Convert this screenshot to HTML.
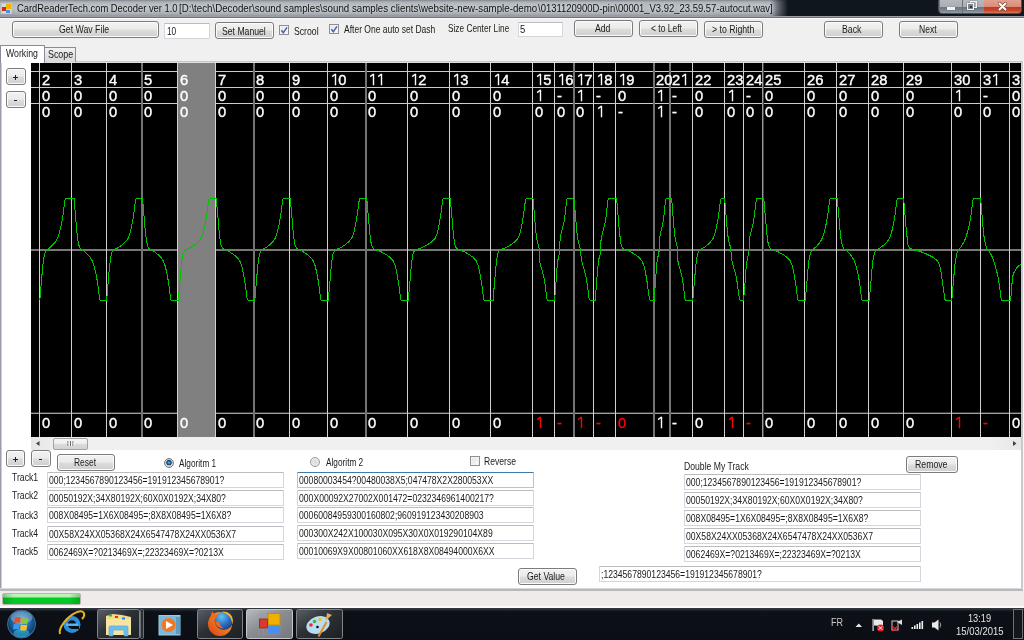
<!DOCTYPE html><html><head><meta charset="utf-8"><style>
*{margin:0;padding:0;box-sizing:border-box}
html,body{width:1024px;height:640px;overflow:hidden;background:#f0f0f0;font-family:"Liberation Sans",sans-serif;position:relative}
.a{position:absolute}
.t{position:absolute;white-space:pre;transform-origin:0 0}
.btn{position:absolute;border:1px solid #7c7c7c;border-radius:3px;background:linear-gradient(#f2f2f2 0%,#ebebeb 48%,#dddddd 52%,#cfcfcf 100%);box-shadow:inset 0 0 0 1px #fbfbfb}
.tb{position:absolute;background:#fff;border:1px solid #d3d6dc;border-top-color:#b9bcc1;border-radius:1px}
.cb{position:absolute;border:1px solid #8e8f8f;background:linear-gradient(135deg,#e3e3e3,#fbfbfb);box-shadow:inset 0 0 0 1px #f4f4f4}
</style></head><body>
<div class="a" style="left:0;top:0;width:1024px;height:16px;background:#10161e;overflow:hidden">
<div class="a" style="left:0;top:0;width:800px;height:16px;background:linear-gradient(#7a8086 0,#9ca2a8 1px,#b0b6bc 3px,#b8bec4 8px,#b0b6bc 11px,#a2a8ae 14px,#92989e 16px);-webkit-mask-image:linear-gradient(90deg,#000 0,#000 770px,rgba(0,0,0,0.5) 778px,transparent 788px)"></div>
</div>
<div class="a" style="left:0;top:16px;width:1024px;height:1px;background:#9a9ea4"></div>
<div class="a" style="left:0;top:17px;width:1024px;height:1px;background:#6e7176"></div>
<div class="a" style="left:0;top:18px;width:1024px;height:1px;background:#fbfbfb"></div>
<div class="a" style="left:1px;top:3px;width:11px;height:11px;background:#d8dadc;border:1px solid #c8c8c8"></div>
<div class="a" style="left:6px;top:4px;width:5px;height:5px;background:#f0b400"></div>
<div class="a" style="left:2px;top:7px;width:4px;height:4px;background:#d02a20"></div>
<div class="a" style="left:6px;top:10px;width:4px;height:3px;background:#4a8ef0"></div>
<div class="t" style="left:16.53px;top:4.00px;font-size:10.43px;line-height:10.43px;transform:scaleX(0.9000);color:#101010;text-shadow:0 0 4px rgba(225,230,236,0.9),0 0 8px rgba(225,230,236,0.6)">CardReaderTech.com Decoder ver 1.0</div>
<div class="t" style="left:179.42px;top:4.00px;font-size:10.43px;line-height:10.43px;transform:scaleX(0.9327);color:#101010;text-shadow:0 0 4px rgba(225,230,236,0.9),0 0 8px rgba(225,230,236,0.6)">[D:\tech\Decoder\sound samples\sound samples clients\website-new-sample-demo</div>
<div class="t" style="left:537.80px;top:4.00px;font-size:10.43px;line-height:10.43px;transform:scaleX(0.9089);color:#101010;text-shadow:0 0 4px rgba(225,230,236,0.9),0 0 8px rgba(225,230,236,0.6)">\0131120900D-pin\00001_V3.92_23.59.57-autocut.wav]</div>
<div class="a" style="left:938px;top:-3px;width:84px;height:17px;border:1px solid #4a5058;border-radius:4px;overflow:hidden;background:#333;box-shadow:inset 0 0 0 1px rgba(255,255,255,0.35)">
<div class="a" style="left:1px;top:0;width:22px;height:15px;background:linear-gradient(#b9bdc2 0%,#a9aeb4 58%,#6c7581 62%,#7e8792 85%,#959da6 100%)"></div>
<div class="a" style="left:23px;top:0;width:1px;height:15px;background:#6a7078"></div>
<div class="a" style="left:24px;top:0;width:21px;height:15px;background:linear-gradient(#b9bdc2 0%,#a9aeb4 58%,#6c7581 62%,#7e8792 85%,#959da6 100%)"></div>
<div class="a" style="left:45px;top:0;width:37px;height:15px;background:linear-gradient(#e6a595 0%,#d98c7a 58%,#c5381a 62%,#c94a2a 85%,#d77a5c 100%)"></div>
</div>
<div class="a" style="left:947px;top:7px;width:8px;height:3px;background:#f4f4f4;box-shadow:0 0 1px #333"></div>
<div class="a" style="left:970px;top:1px;width:7px;height:7px;border:1.5px solid #f4f4f4;box-shadow:0 0 1px #333"></div>
<div class="a" style="left:967px;top:3px;width:7px;height:7px;border:1.5px solid #f4f4f4;background:#7d8690;box-shadow:0 0 1px #333"></div>
<div class="a" style="left:969.5px;top:5.5px;width:2px;height:2px;background:#333"></div>
<svg class="a" style="left:996px;top:1px" width="13" height="11"><path d="M3.5 2.5 L9.5 8.5 M9.5 2.5 L3.5 8.5" stroke="#7a4a40" stroke-width="3.2" stroke-linecap="round"/><path d="M3.5 2.5 L9.5 8.5 M9.5 2.5 L3.5 8.5" stroke="#fff" stroke-width="1.9" stroke-linecap="round"/></svg>
<div class="btn" style="left:12px;top:21px;width:147px;height:17px"></div>
<div class="t" style="left:59.36px;top:25.00px;font-size:10.43px;line-height:10.43px;transform:scaleX(0.8390);color:#1a1a1a;">Get Wav File</div>
<div class="tb" style="left:164px;top:23px;width:46px;height:16px;"></div>
<div class="t" style="left:166.58px;top:26.00px;font-size:10.72px;line-height:10.72px;transform:scaleX(0.7743);color:#1a1a1a;">10</div>
<div class="btn" style="left:215px;top:22px;width:59px;height:17px"></div>
<div class="t" style="left:222.11px;top:27.00px;font-size:10.43px;line-height:10.43px;transform:scaleX(0.8298);color:#1a1a1a;">Set Manuel</div>
<div class="cb" style="left:279px;top:25px;width:10px;height:10px"></div>
<svg class="a" style="left:279px;top:25px" width="10" height="10"><path d="M2.4 5.2 L4.3 7.8 L8 2.4" fill="none" stroke="#4a5fa8" stroke-width="1.5"/></svg>
<div class="t" style="left:294.01px;top:26.00px;font-size:10.72px;line-height:10.72px;transform:scaleX(0.8094);color:#1a1a1a;">Scrool</div>
<div class="cb" style="left:329px;top:24px;width:10px;height:10px"></div>
<svg class="a" style="left:329px;top:24px" width="10" height="10"><path d="M2.4 5.2 L4.3 7.8 L8 2.4" fill="none" stroke="#4a5fa8" stroke-width="1.5"/></svg>
<div class="t" style="left:344.00px;top:24.00px;font-size:10.72px;line-height:10.72px;transform:scaleX(0.7937);color:#1a1a1a;">After One auto set Dash</div>
<div class="t" style="left:448.13px;top:23.00px;font-size:10.72px;line-height:10.72px;transform:scaleX(0.7731);color:#1a1a1a;">Size Center Line</div>
<div class="tb" style="left:518px;top:22px;width:45px;height:15px;"></div>
<div class="t" style="left:519.62px;top:24.00px;font-size:10.72px;line-height:10.72px;transform:scaleX(0.8837);color:#1a1a1a;">5</div>
<div class="btn" style="left:574px;top:20px;width:59px;height:17px"></div>
<div class="t" style="left:595.30px;top:24.00px;font-size:10.43px;line-height:10.43px;transform:scaleX(0.8330);color:#1a1a1a;">Add</div>
<div class="btn" style="left:639px;top:20px;width:59px;height:17px"></div>
<div class="t" style="left:651.48px;top:24.00px;font-size:10.43px;line-height:10.43px;transform:scaleX(0.8130);color:#1a1a1a;">&lt; to Left</div>
<div class="btn" style="left:704px;top:21px;width:59px;height:17px"></div>
<div class="t" style="left:711.56px;top:25.00px;font-size:10.43px;line-height:10.43px;transform:scaleX(0.8356);color:#1a1a1a;">&gt; to Righth</div>
<div class="btn" style="left:824px;top:21px;width:59px;height:17px"></div>
<div class="t" style="left:842.10px;top:25.00px;font-size:10.43px;line-height:10.43px;transform:scaleX(0.8403);color:#1a1a1a;">Back</div>
<div class="btn" style="left:899px;top:21px;width:59px;height:17px"></div>
<div class="t" style="left:918.71px;top:25.00px;font-size:10.43px;line-height:10.43px;transform:scaleX(0.8225);color:#1a1a1a;">Next</div>
<div class="a" style="left:0;top:61px;width:1023px;height:529px;background:#fff"></div>
<div class="a" style="left:0;top:61px;width:1023px;height:1px;background:#c6c8cc"></div>
<div class="a" style="left:0;top:62px;width:1023px;height:1px;background:#dcdde0"></div>
<div class="a" style="left:0;top:61px;width:1px;height:529px;background:#9a9ea6"></div>
<div class="a" style="left:1px;top:62px;width:1px;height:527px;background:#cbcdd1"></div>
<div class="a" style="left:1021px;top:61px;width:2px;height:529px;background:#c8c9cd"></div>
<div class="a" style="left:1023px;top:61px;width:1px;height:529px;background:#f8f8f8"></div>
<div class="a" style="left:0;top:588px;width:1023px;height:1px;background:#d6d8db"></div>
<div class="a" style="left:0;top:589px;width:1023px;height:1px;background:#b4b6b9"></div>
<div class="a" style="left:0;top:590px;width:1023px;height:1px;background:#b8b9bb"></div>
<div class="a" style="left:44px;top:47px;width:32px;height:15px;border:1px solid #898c95;border-bottom:none;background:linear-gradient(#f3f3f3,#e4e4e4 50%,#d9d9d9)"></div>
<div class="a" style="left:0;top:45px;width:45px;height:18px;border:1px solid #898c95;border-bottom:none;background:#fff;border-radius:1px 1px 0 0"></div>
<div class="t" style="left:6.26px;top:48.00px;font-size:10.72px;line-height:10.72px;transform:scaleX(0.8156);color:#1a1a1a;">Working</div>
<div class="t" style="left:47.50px;top:49.00px;font-size:10.72px;line-height:10.72px;transform:scaleX(0.8292);color:#1a1a1a;">Scope</div>
<div class="btn" style="left:6px;top:68px;width:20px;height:17px"></div>
<div class="btn" style="left:6px;top:91px;width:20px;height:17px"></div>
<div class="a" style="left:13px;top:77px;width:5px;height:1.3px;background:#222"></div><div class="a" style="left:15px;top:75px;width:1.2px;height:5px;background:#222"></div>
<div class="a" style="left:14px;top:100px;width:3px;height:1.3px;background:#222"></div>
<svg class="a" style="left:31px;top:63px" width="990" height="374" viewBox="31 63 990 374"><rect x="31" y="63" width="990" height="374" fill="#000"/><rect x="31" y="71" width="990" height="1" fill="#cccccc"/><rect x="31" y="87" width="990" height="1" fill="#cccccc"/><rect x="31" y="103" width="990" height="1" fill="#cccccc"/><rect x="31" y="412" width="990" height="1" fill="#383838"/><rect x="31" y="413" width="990" height="1" fill="#a0a0a0"/><rect x="31" y="249" width="990" height="2" fill="#787878"/><rect x="39" y="63" width="1" height="374" fill="#d0d0d0"/><rect x="71" y="63" width="1" height="374" fill="#d0d0d0"/><rect x="106" y="63" width="1" height="374" fill="#d0d0d0"/><rect x="141" y="63" width="2" height="374" fill="#747474"/><rect x="177" y="63" width="1" height="374" fill="#d0d0d0"/><rect x="215" y="63" width="1" height="374" fill="#d0d0d0"/><rect x="253" y="63" width="2" height="374" fill="#747474"/><rect x="289" y="63" width="1" height="374" fill="#d0d0d0"/><rect x="327" y="63" width="1" height="374" fill="#d0d0d0"/><rect x="365" y="63" width="2" height="374" fill="#747474"/><rect x="407" y="63" width="1" height="374" fill="#d0d0d0"/><rect x="449" y="63" width="1" height="374" fill="#d0d0d0"/><rect x="490" y="63" width="1" height="374" fill="#d0d0d0"/><rect x="532" y="63" width="1" height="374" fill="#d0d0d0"/><rect x="554" y="63" width="1" height="374" fill="#d0d0d0"/><rect x="573" y="63" width="2" height="374" fill="#747474"/><rect x="593" y="63" width="1" height="374" fill="#d0d0d0"/><rect x="615" y="63" width="1" height="374" fill="#d0d0d0"/><rect x="653" y="63" width="2" height="374" fill="#747474"/><rect x="669" y="63" width="2" height="374" fill="#747474"/><rect x="692" y="63" width="1" height="374" fill="#d0d0d0"/><rect x="724" y="63" width="1" height="374" fill="#d0d0d0"/><rect x="743" y="63" width="1" height="374" fill="#d0d0d0"/><rect x="762" y="63" width="1" height="374" fill="#9a9a9a"/><rect x="763" y="63" width="1" height="374" fill="#444"/><rect x="804" y="63" width="1" height="374" fill="#d0d0d0"/><rect x="836" y="63" width="1" height="374" fill="#d0d0d0"/><rect x="868" y="63" width="1" height="374" fill="#d0d0d0"/><rect x="903" y="63" width="1" height="374" fill="#d0d0d0"/><rect x="951" y="63" width="1" height="374" fill="#d0d0d0"/><rect x="980" y="63" width="1" height="374" fill="#d0d0d0"/><rect x="1009" y="63" width="1" height="374" fill="#d0d0d0"/><rect x="178" y="63" width="37" height="374" fill="#808080"/><path d="M39.5 300.5 L39.5 300.5 L39.6 300.5 L39.8 300.5 L40.2 296.2 L40.7 289.9 L41.3 283.2 L41.9 275.9 L42.6 268.2 L43.3 261.7 L44.0 257.1 L44.8 253.7 L45.8 251.0 L47.2 249.3 L48.9 248.4 L50.8 246.9 L53.0 244.7 L55.4 241.9 L57.5 238.3 L59.2 233.3 L60.7 227.4 L62.0 221.4 L63.0 215.1 L63.8 208.6 L64.5 203.6 L64.8 200.8 L65.1 199.3 L66.0 198.5 L68.5 198.5 L71.7 198.5 L74.0 198.5 L74.5 198.5 L74.2 198.5 L74.0 198.5 L74.4 202.8 L74.9 209.1 L75.5 215.8 L76.1 223.1 L76.8 230.8 L77.5 237.3 L78.2 241.9 L78.9 245.3 L80.0 248.0 L81.5 249.7 L83.3 250.6 L85.3 252.1 L87.5 254.3 L90.0 257.1 L92.2 260.7 L94.0 265.7 L95.4 271.6 L96.7 277.6 L97.7 283.9 L98.5 290.4 L99.2 295.4 L99.6 298.2 L99.9 299.6 L100.7 300.5 L102.6 300.5 L104.9 300.5 L106.6 300.5 L107.0 300.5 L106.7 300.5 L106.6 300.5 L107.0 296.2 L107.5 289.9 L108.1 283.2 L108.7 275.9 L109.4 268.2 L110.1 261.7 L110.7 257.1 L111.4 253.7 L112.6 251.0 L114.5 249.3 L116.8 248.4 L119.4 246.9 L122.3 244.7 L125.4 241.9 L128.1 238.3 L130.0 233.3 L131.4 227.4 L132.6 221.4 L133.6 215.1 L134.4 208.6 L135.1 203.6 L135.5 200.8 L135.8 199.3 L136.6 198.5 L138.5 198.5 L140.8 198.5 L142.5 198.5 L142.9 198.5 L142.6 198.5 L142.5 198.5 L142.9 202.8 L143.4 209.1 L144.0 215.8 L144.6 223.1 L145.3 230.8 L146.0 237.3 L146.7 241.9 L147.4 245.3 L148.5 248.0 L150.3 249.7 L152.5 250.6 L154.9 252.1 L157.7 254.3 L160.6 257.1 L163.2 260.7 L165.1 265.7 L166.5 271.6 L167.7 277.6 L168.7 283.9 L169.5 290.4 L170.2 295.4 L170.6 298.2 L170.9 299.6 L171.7 300.5 L173.8 300.5 L176.4 300.5 L178.3 300.5 L178.7 300.5 L178.4 300.5 L178.3 300.5 L178.7 296.2 L179.2 289.9 L179.8 283.2 L180.4 275.9 L181.1 268.2 L181.8 261.7 L182.4 257.1 L183.1 253.7 L184.3 251.0 L186.3 249.3 L188.9 248.4 L191.7 246.9 L194.9 244.7 L198.3 241.9 L201.2 238.3 L203.1 233.3 L204.5 227.4 L205.7 221.4 L206.7 215.1 L207.5 208.6 L208.2 203.6 L208.6 200.8 L208.9 199.3 L209.7 198.5 L211.8 198.5 L214.4 198.5 L216.3 198.5 L216.7 198.5 L216.4 198.5 L216.3 198.5 L216.7 202.8 L217.2 209.1 L217.8 215.8 L218.4 223.1 L219.1 230.8 L219.8 237.3 L220.4 241.9 L221.1 245.3 L222.3 248.0 L224.4 249.7 L227.0 250.6 L229.9 252.1 L233.2 254.3 L236.7 257.1 L239.7 260.7 L241.7 265.7 L243.0 271.6 L244.2 277.6 L245.2 283.9 L246.0 290.4 L246.7 295.4 L247.1 298.2 L247.4 299.6 L248.2 300.5 L250.3 300.5 L252.9 300.5 L254.8 300.5 L255.2 300.5 L254.9 300.5 L254.8 300.5 L255.2 296.2 L255.7 289.9 L256.3 283.2 L256.9 275.9 L257.6 268.2 L258.3 261.7 L259.0 257.1 L259.7 253.7 L260.8 251.0 L262.5 249.3 L264.7 248.4 L267.1 246.9 L269.8 244.7 L272.7 241.9 L275.2 238.3 L277.0 233.3 L278.5 227.4 L279.7 221.4 L280.7 215.1 L281.5 208.6 L282.2 203.6 L282.6 200.8 L282.9 199.3 L283.7 198.5 L285.8 198.5 L288.4 198.5 L290.3 198.5 L290.7 198.5 L290.4 198.5 L290.3 198.5 L290.7 202.8 L291.2 209.1 L291.8 215.8 L292.4 223.1 L293.1 230.8 L293.8 237.3 L294.4 241.9 L295.1 245.3 L296.3 248.0 L298.3 249.7 L300.9 250.6 L303.7 252.1 L306.9 254.3 L310.3 257.1 L313.2 260.7 L315.1 265.7 L316.5 271.6 L317.7 277.6 L318.7 283.9 L319.5 290.4 L320.2 295.4 L320.6 298.2 L320.9 299.6 L321.7 300.5 L323.8 300.5 L326.4 300.5 L328.3 300.5 L328.7 300.5 L328.4 300.5 L328.3 300.5 L328.7 296.2 L329.2 289.9 L329.8 283.2 L330.4 275.9 L331.1 268.2 L331.8 261.7 L332.4 257.1 L333.1 253.7 L334.3 251.0 L336.4 249.3 L339.0 248.4 L341.9 246.9 L345.2 244.7 L348.7 241.9 L351.7 238.3 L353.7 233.3 L355.0 227.4 L356.2 221.4 L357.2 215.1 L358.0 208.6 L358.7 203.6 L359.1 200.8 L359.4 199.3 L360.2 198.5 L362.3 198.5 L364.9 198.5 L366.8 198.5 L367.2 198.5 L366.9 198.5 L366.8 198.5 L367.2 202.8 L367.7 209.1 L368.3 215.8 L368.9 223.1 L369.6 230.8 L370.3 237.3 L370.9 241.9 L371.5 245.3 L372.8 248.0 L375.2 249.7 L378.4 250.6 L381.8 252.1 L385.6 254.3 L389.8 257.1 L393.2 260.7 L395.3 265.7 L396.6 271.6 L397.7 277.6 L398.7 283.9 L399.5 290.4 L400.2 295.4 L400.6 298.2 L400.9 299.6 L401.7 300.5 L403.8 300.5 L406.4 300.5 L408.3 300.5 L408.7 300.5 L408.4 300.5 L408.3 300.5 L408.7 296.2 L409.2 289.9 L409.8 283.2 L410.4 275.9 L411.1 268.2 L411.8 261.7 L412.3 257.1 L413.0 253.7 L414.3 251.0 L416.8 249.3 L420.0 248.4 L423.5 246.9 L427.5 244.7 L431.7 241.9 L435.2 238.3 L437.3 233.3 L438.6 227.4 L439.7 221.4 L440.7 215.1 L441.5 208.6 L442.2 203.6 L442.6 200.8 L442.9 199.3 L443.7 198.5 L445.8 198.5 L448.4 198.5 L450.3 198.5 L450.7 198.5 L450.4 198.5 L450.3 198.5 L450.7 202.8 L451.2 209.1 L451.8 215.8 L452.4 223.1 L453.1 230.8 L453.8 237.3 L454.4 241.9 L455.0 245.3 L456.3 248.0 L458.7 249.7 L461.7 250.6 L465.0 252.1 L468.8 254.3 L472.9 257.1 L476.2 260.7 L478.3 265.7 L479.6 271.6 L480.7 277.6 L481.7 283.9 L482.5 290.4 L483.2 295.4 L483.5 298.2 L483.7 299.6 L484.7 300.5 L487.3 300.5 L490.6 300.5 L493.0 300.5 L493.6 300.5 L493.2 300.5 L493.0 300.5 L493.4 296.2 L493.9 289.9 L494.5 283.2 L495.1 275.9 L495.8 268.2 L496.5 261.7 L497.1 257.1 L497.7 253.7 L499.0 251.0 L501.3 249.3 L504.2 248.4 L507.3 246.9 L510.9 244.7 L514.8 241.9 L518.0 238.3 L520.0 233.3 L521.4 227.4 L522.5 221.4 L523.5 215.1 L524.3 208.6 L525.0 203.6 L525.4 200.8 L525.7 199.3 L526.5 198.5 L528.5 198.5 L531.1 198.5 L533.0 198.5 L533.4 198.5 L533.1 198.5 L533.0 198.5 L533.4 202.8 L533.9 209.1 L534.5 215.8 L535.1 223.1 L535.8 230.8 L536.5 237.3 L537.4 241.5 L538.3 244.6 L539.0 248.0 L539.2 251.9 L539.1 256.1 L539.5 260.7 L540.8 266.0 L542.5 271.7 L544.0 277.6 L545.0 283.9 L545.8 290.4 L546.5 295.4 L546.9 298.2 L547.2 299.6 L548.0 300.5 L550.1 300.5 L552.7 300.5 L554.6 300.5 L555.0 300.5 L554.7 300.5 L554.6 300.5 L554.9 296.2 L555.4 289.9 L555.9 283.2 L556.4 275.9 L557.0 268.2 L557.6 261.7 L558.4 257.5 L559.2 254.4 L559.8 251.0 L559.9 247.1 L559.9 242.9 L560.2 238.3 L561.3 233.0 L562.8 227.3 L564.1 221.4 L565.0 215.1 L565.7 208.6 L566.3 203.6 L566.6 200.8 L566.8 199.3 L567.6 198.5 L569.6 198.5 L572.2 198.5 L574.0 198.5 L574.4 198.5 L574.1 198.5 L574.0 198.5 L574.4 202.8 L574.9 209.1 L575.5 215.8 L576.1 223.1 L576.8 230.8 L577.5 237.3 L578.3 241.5 L579.2 244.6 L580.0 248.0 L580.5 251.9 L581.0 256.1 L581.7 260.7 L583.1 266.0 L584.7 271.7 L586.2 277.6 L587.2 283.9 L588.0 290.4 L588.7 295.4 L589.1 298.2 L589.5 299.6 L590.2 300.5 L591.8 300.5 L593.8 300.5 L595.2 300.5 L595.5 300.5 L595.3 300.5 L595.2 300.5 L595.5 296.2 L596.0 289.9 L596.6 283.2 L597.1 275.9 L597.8 268.2 L598.4 261.7 L599.2 257.5 L600.1 254.4 L600.7 251.0 L600.9 247.1 L600.8 242.9 L601.2 238.3 L602.4 233.0 L603.9 227.3 L605.3 221.4 L606.3 215.1 L607.0 208.6 L607.6 203.6 L607.9 200.8 L608.1 199.3 L609.0 198.5 L611.4 198.5 L614.4 198.5 L616.6 198.5 L617.1 198.5 L616.8 198.5 L616.6 198.5 L617.0 202.8 L617.5 209.1 L618.1 215.8 L618.7 223.1 L619.4 230.8 L620.1 237.3 L620.7 241.9 L621.3 245.3 L622.6 248.0 L624.9 249.7 L627.8 250.6 L631.1 252.1 L634.7 254.3 L638.7 257.1 L641.9 260.7 L643.9 265.7 L645.3 271.6 L646.4 277.6 L647.4 283.9 L648.2 290.4 L648.9 295.4 L649.4 298.2 L649.8 299.6 L650.4 300.5 L651.6 300.5 L653.1 300.5 L654.2 300.5 L654.4 300.5 L654.3 300.5 L654.2 300.5 L654.5 296.2 L654.9 289.9 L655.4 283.2 L655.9 275.9 L656.5 268.2 L657.0 261.7 L657.8 257.5 L658.5 254.4 L659.1 251.0 L659.2 247.1 L659.2 242.9 L659.5 238.3 L660.5 233.0 L661.9 227.3 L663.1 221.4 L664.0 215.1 L664.6 208.6 L665.2 203.6 L665.5 200.8 L665.7 199.3 L666.4 198.5 L668.0 198.5 L670.1 198.5 L671.6 198.5 L671.9 198.5 L671.7 198.5 L671.6 198.5 L672.0 202.8 L672.5 209.1 L673.0 215.8 L673.6 223.1 L674.3 230.8 L675.0 237.3 L675.8 241.5 L676.7 244.6 L677.4 248.0 L677.5 251.9 L677.5 256.1 L677.8 260.7 L679.1 266.0 L680.7 271.7 L682.2 277.6 L683.1 283.9 L683.9 290.4 L684.6 295.4 L684.9 298.2 L685.2 299.6 L686.0 300.5 L688.1 300.5 L690.8 300.5 L692.8 300.5 L693.2 300.5 L692.9 300.5 L692.8 300.5 L693.2 296.2 L693.7 289.9 L694.3 283.2 L694.9 275.9 L695.6 268.2 L696.3 261.7 L697.0 257.1 L697.7 253.7 L698.8 251.0 L700.5 249.3 L702.7 248.4 L705.0 246.9 L707.7 244.7 L710.6 241.9 L713.1 238.3 L714.9 233.3 L716.4 227.4 L717.6 221.4 L718.6 215.1 L719.4 208.6 L720.1 203.6 L720.6 200.8 L721.0 199.3 L721.6 198.5 L722.6 198.5 L723.8 198.5 L724.6 198.5 L724.8 198.5 L724.6 198.5 L724.6 198.5 L725.0 202.8 L725.5 209.1 L726.1 215.8 L726.7 223.1 L727.4 230.8 L728.1 237.3 L728.9 241.5 L729.8 244.6 L730.6 248.0 L731.0 251.9 L731.3 256.1 L731.9 260.7 L733.2 266.0 L734.9 271.7 L736.4 277.6 L737.4 283.9 L738.2 290.4 L738.9 295.4 L739.4 298.2 L739.8 299.6 L740.4 300.5 L741.5 300.5 L742.7 300.5 L743.6 300.5 L743.8 300.5 L743.6 300.5 L743.6 300.5 L743.9 296.2 L744.4 289.9 L745.0 283.2 L745.5 275.9 L746.1 268.2 L746.8 261.7 L747.6 257.5 L748.4 254.4 L749.0 251.0 L749.2 247.1 L749.1 242.9 L749.5 238.3 L750.7 233.0 L752.2 227.3 L753.6 221.4 L754.5 215.1 L755.2 208.6 L755.8 203.6 L756.2 200.8 L756.4 199.3 L757.2 198.5 L759.3 198.5 L761.9 198.5 L763.8 198.5 L764.2 198.5 L763.9 198.5 L763.8 198.5 L764.2 202.8 L764.7 209.1 L765.3 215.8 L765.9 223.1 L766.6 230.8 L767.3 237.3 L767.9 241.9 L768.5 245.3 L769.8 248.0 L772.2 249.7 L775.4 250.6 L778.8 252.1 L782.6 254.3 L786.8 257.1 L790.2 260.7 L792.3 265.7 L793.6 271.6 L794.7 277.6 L795.7 283.9 L796.5 290.4 L797.2 295.4 L797.6 298.2 L797.9 299.6 L798.7 300.5 L800.8 300.5 L803.4 300.5 L805.3 300.5 L805.7 300.5 L805.4 300.5 L805.3 300.5 L805.7 296.2 L806.2 289.9 L806.8 283.2 L807.4 275.9 L808.1 268.2 L808.8 261.7 L809.5 257.1 L810.3 253.7 L811.3 251.0 L812.6 249.3 L814.2 248.4 L816.0 246.9 L818.0 244.7 L820.2 241.9 L822.2 238.3 L823.9 233.3 L825.4 227.4 L826.7 221.4 L827.7 215.1 L828.5 208.6 L829.2 203.6 L829.6 200.8 L829.9 199.3 L830.7 198.5 L832.8 198.5 L835.4 198.5 L837.3 198.5 L837.7 198.5 L837.4 198.5 L837.3 198.5 L837.7 202.8 L838.2 209.1 L838.8 215.8 L839.4 223.1 L840.1 230.8 L840.8 237.3 L841.5 241.9 L842.3 245.3 L843.3 248.0 L844.6 249.7 L846.2 250.6 L848.0 252.1 L850.0 254.3 L852.2 257.1 L854.2 260.7 L855.9 265.7 L857.4 271.6 L858.7 277.6 L859.7 283.9 L860.5 290.4 L861.2 295.4 L861.6 298.2 L861.9 299.6 L862.7 300.5 L864.8 300.5 L867.4 300.5 L869.3 300.5 L869.7 300.5 L869.4 300.5 L869.3 300.5 L869.7 296.2 L870.2 289.9 L870.8 283.2 L871.4 275.9 L872.1 268.2 L872.8 261.7 L873.5 257.1 L874.2 253.7 L875.3 251.0 L877.0 249.3 L879.1 248.4 L881.5 246.9 L884.1 244.7 L887.0 241.9 L889.5 238.3 L891.3 233.3 L892.8 227.4 L894.0 221.4 L895.0 215.1 L895.8 208.6 L896.5 203.6 L896.9 200.8 L897.2 199.3 L898.0 198.5 L899.8 198.5 L902.0 198.5 L903.6 198.5 L904.0 198.5 L903.7 198.5 L903.6 198.5 L904.0 202.8 L904.5 209.1 L905.1 215.8 L905.7 223.1 L906.4 230.8 L907.1 237.3 L907.5 241.9 L908.0 245.3 L909.6 248.0 L912.8 249.7 L917.2 250.6 L921.8 252.1 L927.2 254.3 L932.8 257.1 L937.3 260.7 L939.7 265.7 L940.9 271.6 L941.8 277.6 L942.8 283.9 L943.6 290.4 L944.3 295.4 L944.7 298.2 L945.0 299.6 L945.8 300.5 L947.7 300.5 L950.1 300.5 L951.8 300.5 L952.2 300.5 L951.9 300.5 L951.8 300.5 L952.2 296.2 L952.7 289.9 L953.3 283.2 L953.9 275.9 L954.6 268.2 L955.3 261.7 L956.1 257.1 L956.9 253.7 L957.8 251.0 L958.8 249.3 L959.8 248.4 L961.0 246.9 L962.4 244.7 L964.0 241.9 L965.5 238.3 L967.1 233.3 L968.6 227.4 L970.0 221.4 L971.0 215.1 L971.8 208.6 L972.5 203.6 L972.9 200.8 L973.2 199.3 L974.0 198.5 L976.1 198.5 L978.7 198.5 L980.6 198.5 L981.0 198.5 L980.7 198.5 L980.6 198.5 L981.0 202.8 L981.5 209.1 L982.1 215.8 L982.7 223.1 L983.4 230.8 L984.1 237.3 L984.9 241.9 L985.7 245.3 L986.6 248.0 L987.5 249.7 L988.5 250.6 L989.6 252.1 L990.9 254.3 L992.3 257.1 L993.7 260.7 L995.2 265.7 L996.8 271.6 L998.2 277.6 L999.2 283.9 L1000.0 290.4 L1000.7 295.4 L1001.0 298.2 L1001.2 299.6 L1002.2 300.5 L1004.6 300.5 L1007.8 300.5 L1010.3 300.5 L1011.4 294.0 L1011.9 284.9 L1012.5 277.5 L1013.5 273.7 L1014.5 271.6 L1015.5 269.9 L1016.4 268.3 L1017.2 267.2 L1018.0 266.3 L1019.0 265.6 L1020.1 265.1 L1020.8 264.8" fill="none" stroke="#00c400" stroke-width="1" shape-rendering="crispEdges"/></svg>
<div class="a" style="left:0;top:0;width:1021px;height:640px;overflow:hidden;clip-path:inset(63px 0 0 31px)">
<div class="t" style="left:41.80px;top:72.00px;font-size:15.00px;line-height:15.00px;transform:scaleX(0.9800);color:#ffffff;-webkit-text-stroke:0.4px #ffffff">2</div>
<div class="t" style="left:41.80px;top:88.00px;font-size:15.00px;line-height:15.00px;transform:scaleX(0.9800);color:#ffffff;-webkit-text-stroke:0.4px #ffffff">0</div>
<div class="t" style="left:41.80px;top:104.00px;font-size:15.00px;line-height:15.00px;transform:scaleX(0.9800);color:#ffffff;-webkit-text-stroke:0.4px #ffffff">0</div>
<div class="t" style="left:41.80px;top:415.00px;font-size:15.00px;line-height:15.00px;transform:scaleX(0.9800);color:#ffffff;-webkit-text-stroke:0.4px #ffffff">0</div>
<div class="t" style="left:73.80px;top:72.00px;font-size:15.00px;line-height:15.00px;transform:scaleX(0.9800);color:#ffffff;-webkit-text-stroke:0.4px #ffffff">3</div>
<div class="t" style="left:73.80px;top:88.00px;font-size:15.00px;line-height:15.00px;transform:scaleX(0.9800);color:#ffffff;-webkit-text-stroke:0.4px #ffffff">0</div>
<div class="t" style="left:73.80px;top:104.00px;font-size:15.00px;line-height:15.00px;transform:scaleX(0.9800);color:#ffffff;-webkit-text-stroke:0.4px #ffffff">0</div>
<div class="t" style="left:73.80px;top:415.00px;font-size:15.00px;line-height:15.00px;transform:scaleX(0.9800);color:#ffffff;-webkit-text-stroke:0.4px #ffffff">0</div>
<div class="t" style="left:108.80px;top:72.00px;font-size:15.00px;line-height:15.00px;transform:scaleX(0.9800);color:#ffffff;-webkit-text-stroke:0.4px #ffffff">4</div>
<div class="t" style="left:108.80px;top:88.00px;font-size:15.00px;line-height:15.00px;transform:scaleX(0.9800);color:#ffffff;-webkit-text-stroke:0.4px #ffffff">0</div>
<div class="t" style="left:108.80px;top:104.00px;font-size:15.00px;line-height:15.00px;transform:scaleX(0.9800);color:#ffffff;-webkit-text-stroke:0.4px #ffffff">0</div>
<div class="t" style="left:108.80px;top:415.00px;font-size:15.00px;line-height:15.00px;transform:scaleX(0.9800);color:#ffffff;-webkit-text-stroke:0.4px #ffffff">0</div>
<div class="t" style="left:143.80px;top:72.00px;font-size:15.00px;line-height:15.00px;transform:scaleX(0.9800);color:#ffffff;-webkit-text-stroke:0.4px #ffffff">5</div>
<div class="t" style="left:143.80px;top:88.00px;font-size:15.00px;line-height:15.00px;transform:scaleX(0.9800);color:#ffffff;-webkit-text-stroke:0.4px #ffffff">0</div>
<div class="t" style="left:143.80px;top:104.00px;font-size:15.00px;line-height:15.00px;transform:scaleX(0.9800);color:#ffffff;-webkit-text-stroke:0.4px #ffffff">0</div>
<div class="t" style="left:143.80px;top:415.00px;font-size:15.00px;line-height:15.00px;transform:scaleX(0.9800);color:#ffffff;-webkit-text-stroke:0.4px #ffffff">0</div>
<div class="t" style="left:179.80px;top:72.00px;font-size:15.00px;line-height:15.00px;transform:scaleX(0.9800);color:#ffffff;-webkit-text-stroke:0.4px #ffffff">6</div>
<div class="t" style="left:179.80px;top:88.00px;font-size:15.00px;line-height:15.00px;transform:scaleX(0.9800);color:#ffffff;-webkit-text-stroke:0.4px #ffffff">0</div>
<div class="t" style="left:179.80px;top:104.00px;font-size:15.00px;line-height:15.00px;transform:scaleX(0.9800);color:#ffffff;-webkit-text-stroke:0.4px #ffffff">0</div>
<div class="t" style="left:179.80px;top:415.00px;font-size:15.00px;line-height:15.00px;transform:scaleX(0.9800);color:#ffffff;-webkit-text-stroke:0.4px #ffffff">0</div>
<div class="t" style="left:217.80px;top:72.00px;font-size:15.00px;line-height:15.00px;transform:scaleX(0.9800);color:#ffffff;-webkit-text-stroke:0.4px #ffffff">7</div>
<div class="t" style="left:217.80px;top:88.00px;font-size:15.00px;line-height:15.00px;transform:scaleX(0.9800);color:#ffffff;-webkit-text-stroke:0.4px #ffffff">0</div>
<div class="t" style="left:217.80px;top:104.00px;font-size:15.00px;line-height:15.00px;transform:scaleX(0.9800);color:#ffffff;-webkit-text-stroke:0.4px #ffffff">0</div>
<div class="t" style="left:217.80px;top:415.00px;font-size:15.00px;line-height:15.00px;transform:scaleX(0.9800);color:#ffffff;-webkit-text-stroke:0.4px #ffffff">0</div>
<div class="t" style="left:255.80px;top:72.00px;font-size:15.00px;line-height:15.00px;transform:scaleX(0.9800);color:#ffffff;-webkit-text-stroke:0.4px #ffffff">8</div>
<div class="t" style="left:255.80px;top:88.00px;font-size:15.00px;line-height:15.00px;transform:scaleX(0.9800);color:#ffffff;-webkit-text-stroke:0.4px #ffffff">0</div>
<div class="t" style="left:255.80px;top:104.00px;font-size:15.00px;line-height:15.00px;transform:scaleX(0.9800);color:#ffffff;-webkit-text-stroke:0.4px #ffffff">0</div>
<div class="t" style="left:255.80px;top:415.00px;font-size:15.00px;line-height:15.00px;transform:scaleX(0.9800);color:#ffffff;-webkit-text-stroke:0.4px #ffffff">0</div>
<div class="t" style="left:291.80px;top:72.00px;font-size:15.00px;line-height:15.00px;transform:scaleX(0.9800);color:#ffffff;-webkit-text-stroke:0.4px #ffffff">9</div>
<div class="t" style="left:291.80px;top:88.00px;font-size:15.00px;line-height:15.00px;transform:scaleX(0.9800);color:#ffffff;-webkit-text-stroke:0.4px #ffffff">0</div>
<div class="t" style="left:291.80px;top:104.00px;font-size:15.00px;line-height:15.00px;transform:scaleX(0.9800);color:#ffffff;-webkit-text-stroke:0.4px #ffffff">0</div>
<div class="t" style="left:291.80px;top:415.00px;font-size:15.00px;line-height:15.00px;transform:scaleX(0.9800);color:#ffffff;-webkit-text-stroke:0.4px #ffffff">0</div>
<div class="t" style="left:329.80px;top:72.00px;font-size:15.00px;line-height:15.00px;transform:scaleX(0.9800);color:#ffffff;-webkit-text-stroke:0.4px #ffffff"> 0</div>
<div class="t" style="left:329.80px;top:88.00px;font-size:15.00px;line-height:15.00px;transform:scaleX(0.9800);color:#ffffff;-webkit-text-stroke:0.4px #ffffff">0</div>
<div class="t" style="left:329.80px;top:104.00px;font-size:15.00px;line-height:15.00px;transform:scaleX(0.9800);color:#ffffff;-webkit-text-stroke:0.4px #ffffff">0</div>
<div class="t" style="left:329.80px;top:415.00px;font-size:15.00px;line-height:15.00px;transform:scaleX(0.9800);color:#ffffff;-webkit-text-stroke:0.4px #ffffff">0</div>
<div class="t" style="left:367.80px;top:72.00px;font-size:15.00px;line-height:15.00px;transform:scaleX(0.9800);color:#ffffff;-webkit-text-stroke:0.4px #ffffff">  </div>
<div class="t" style="left:367.80px;top:88.00px;font-size:15.00px;line-height:15.00px;transform:scaleX(0.9800);color:#ffffff;-webkit-text-stroke:0.4px #ffffff">0</div>
<div class="t" style="left:367.80px;top:104.00px;font-size:15.00px;line-height:15.00px;transform:scaleX(0.9800);color:#ffffff;-webkit-text-stroke:0.4px #ffffff">0</div>
<div class="t" style="left:367.80px;top:415.00px;font-size:15.00px;line-height:15.00px;transform:scaleX(0.9800);color:#ffffff;-webkit-text-stroke:0.4px #ffffff">0</div>
<div class="t" style="left:409.80px;top:72.00px;font-size:15.00px;line-height:15.00px;transform:scaleX(0.9800);color:#ffffff;-webkit-text-stroke:0.4px #ffffff"> 2</div>
<div class="t" style="left:409.80px;top:88.00px;font-size:15.00px;line-height:15.00px;transform:scaleX(0.9800);color:#ffffff;-webkit-text-stroke:0.4px #ffffff">0</div>
<div class="t" style="left:409.80px;top:104.00px;font-size:15.00px;line-height:15.00px;transform:scaleX(0.9800);color:#ffffff;-webkit-text-stroke:0.4px #ffffff">0</div>
<div class="t" style="left:409.80px;top:415.00px;font-size:15.00px;line-height:15.00px;transform:scaleX(0.9800);color:#ffffff;-webkit-text-stroke:0.4px #ffffff">0</div>
<div class="t" style="left:451.80px;top:72.00px;font-size:15.00px;line-height:15.00px;transform:scaleX(0.9800);color:#ffffff;-webkit-text-stroke:0.4px #ffffff"> 3</div>
<div class="t" style="left:451.80px;top:88.00px;font-size:15.00px;line-height:15.00px;transform:scaleX(0.9800);color:#ffffff;-webkit-text-stroke:0.4px #ffffff">0</div>
<div class="t" style="left:451.80px;top:104.00px;font-size:15.00px;line-height:15.00px;transform:scaleX(0.9800);color:#ffffff;-webkit-text-stroke:0.4px #ffffff">0</div>
<div class="t" style="left:451.80px;top:415.00px;font-size:15.00px;line-height:15.00px;transform:scaleX(0.9800);color:#ffffff;-webkit-text-stroke:0.4px #ffffff">0</div>
<div class="t" style="left:492.80px;top:72.00px;font-size:15.00px;line-height:15.00px;transform:scaleX(0.9800);color:#ffffff;-webkit-text-stroke:0.4px #ffffff"> 4</div>
<div class="t" style="left:492.80px;top:88.00px;font-size:15.00px;line-height:15.00px;transform:scaleX(0.9800);color:#ffffff;-webkit-text-stroke:0.4px #ffffff">0</div>
<div class="t" style="left:492.80px;top:104.00px;font-size:15.00px;line-height:15.00px;transform:scaleX(0.9800);color:#ffffff;-webkit-text-stroke:0.4px #ffffff">0</div>
<div class="t" style="left:492.80px;top:415.00px;font-size:15.00px;line-height:15.00px;transform:scaleX(0.9800);color:#ffffff;-webkit-text-stroke:0.4px #ffffff">0</div>
<div class="t" style="left:534.80px;top:72.00px;font-size:15.00px;line-height:15.00px;transform:scaleX(0.9800);color:#ffffff;-webkit-text-stroke:0.4px #ffffff"> 5</div>
<div class="t" style="left:534.80px;top:88.00px;font-size:15.00px;line-height:15.00px;transform:scaleX(0.9800);color:#ffffff;-webkit-text-stroke:0.4px #ffffff"> </div>
<div class="t" style="left:534.80px;top:104.00px;font-size:15.00px;line-height:15.00px;transform:scaleX(0.9800);color:#ffffff;-webkit-text-stroke:0.4px #ffffff">0</div>
<div class="t" style="left:534.80px;top:415.00px;font-size:15.00px;line-height:15.00px;transform:scaleX(0.9800);color:#ff0000;-webkit-text-stroke:0.4px #ff0000"> </div>
<div class="t" style="left:556.80px;top:72.00px;font-size:15.00px;line-height:15.00px;transform:scaleX(0.9800);color:#ffffff;-webkit-text-stroke:0.4px #ffffff"> 6</div>
<div class="t" style="left:556.80px;top:88.00px;font-size:15.00px;line-height:15.00px;transform:scaleX(0.9800);color:#ffffff;-webkit-text-stroke:0.4px #ffffff">-</div>
<div class="t" style="left:556.80px;top:104.00px;font-size:15.00px;line-height:15.00px;transform:scaleX(0.9800);color:#ffffff;-webkit-text-stroke:0.4px #ffffff">0</div>
<div class="t" style="left:556.80px;top:415.00px;font-size:15.00px;line-height:15.00px;transform:scaleX(0.9800);color:#ff0000;-webkit-text-stroke:0.4px #ff0000">-</div>
<div class="t" style="left:575.80px;top:72.00px;font-size:15.00px;line-height:15.00px;transform:scaleX(0.9800);color:#ffffff;-webkit-text-stroke:0.4px #ffffff"> 7</div>
<div class="t" style="left:575.80px;top:88.00px;font-size:15.00px;line-height:15.00px;transform:scaleX(0.9800);color:#ffffff;-webkit-text-stroke:0.4px #ffffff"> </div>
<div class="t" style="left:575.80px;top:104.00px;font-size:15.00px;line-height:15.00px;transform:scaleX(0.9800);color:#ffffff;-webkit-text-stroke:0.4px #ffffff">0</div>
<div class="t" style="left:575.80px;top:415.00px;font-size:15.00px;line-height:15.00px;transform:scaleX(0.9800);color:#ff0000;-webkit-text-stroke:0.4px #ff0000"> </div>
<div class="t" style="left:595.80px;top:72.00px;font-size:15.00px;line-height:15.00px;transform:scaleX(0.9800);color:#ffffff;-webkit-text-stroke:0.4px #ffffff"> 8</div>
<div class="t" style="left:595.80px;top:88.00px;font-size:15.00px;line-height:15.00px;transform:scaleX(0.9800);color:#ffffff;-webkit-text-stroke:0.4px #ffffff">-</div>
<div class="t" style="left:595.80px;top:104.00px;font-size:15.00px;line-height:15.00px;transform:scaleX(0.9800);color:#ffffff;-webkit-text-stroke:0.4px #ffffff"> </div>
<div class="t" style="left:595.80px;top:415.00px;font-size:15.00px;line-height:15.00px;transform:scaleX(0.9800);color:#ff0000;-webkit-text-stroke:0.4px #ff0000">-</div>
<div class="t" style="left:617.80px;top:72.00px;font-size:15.00px;line-height:15.00px;transform:scaleX(0.9800);color:#ffffff;-webkit-text-stroke:0.4px #ffffff"> 9</div>
<div class="t" style="left:617.80px;top:88.00px;font-size:15.00px;line-height:15.00px;transform:scaleX(0.9800);color:#ffffff;-webkit-text-stroke:0.4px #ffffff">0</div>
<div class="t" style="left:617.80px;top:104.00px;font-size:15.00px;line-height:15.00px;transform:scaleX(0.9800);color:#ffffff;-webkit-text-stroke:0.4px #ffffff">-</div>
<div class="t" style="left:617.80px;top:415.00px;font-size:15.00px;line-height:15.00px;transform:scaleX(0.9800);color:#ff0000;-webkit-text-stroke:0.4px #ff0000">0</div>
<div class="t" style="left:655.80px;top:72.00px;font-size:15.00px;line-height:15.00px;transform:scaleX(0.9800);color:#ffffff;-webkit-text-stroke:0.4px #ffffff">20</div>
<div class="t" style="left:655.80px;top:88.00px;font-size:15.00px;line-height:15.00px;transform:scaleX(0.9800);color:#ffffff;-webkit-text-stroke:0.4px #ffffff"> </div>
<div class="t" style="left:655.80px;top:104.00px;font-size:15.00px;line-height:15.00px;transform:scaleX(0.9800);color:#ffffff;-webkit-text-stroke:0.4px #ffffff"> </div>
<div class="t" style="left:655.80px;top:415.00px;font-size:15.00px;line-height:15.00px;transform:scaleX(0.9800);color:#ffffff;-webkit-text-stroke:0.4px #ffffff"> </div>
<div class="t" style="left:671.80px;top:72.00px;font-size:15.00px;line-height:15.00px;transform:scaleX(0.9800);color:#ffffff;-webkit-text-stroke:0.4px #ffffff">2 </div>
<div class="t" style="left:671.80px;top:88.00px;font-size:15.00px;line-height:15.00px;transform:scaleX(0.9800);color:#ffffff;-webkit-text-stroke:0.4px #ffffff">-</div>
<div class="t" style="left:671.80px;top:104.00px;font-size:15.00px;line-height:15.00px;transform:scaleX(0.9800);color:#ffffff;-webkit-text-stroke:0.4px #ffffff">-</div>
<div class="t" style="left:671.80px;top:415.00px;font-size:15.00px;line-height:15.00px;transform:scaleX(0.9800);color:#ffffff;-webkit-text-stroke:0.4px #ffffff">-</div>
<div class="t" style="left:694.80px;top:72.00px;font-size:15.00px;line-height:15.00px;transform:scaleX(0.9800);color:#ffffff;-webkit-text-stroke:0.4px #ffffff">22</div>
<div class="t" style="left:694.80px;top:88.00px;font-size:15.00px;line-height:15.00px;transform:scaleX(0.9800);color:#ffffff;-webkit-text-stroke:0.4px #ffffff">0</div>
<div class="t" style="left:694.80px;top:104.00px;font-size:15.00px;line-height:15.00px;transform:scaleX(0.9800);color:#ffffff;-webkit-text-stroke:0.4px #ffffff">0</div>
<div class="t" style="left:694.80px;top:415.00px;font-size:15.00px;line-height:15.00px;transform:scaleX(0.9800);color:#ffffff;-webkit-text-stroke:0.4px #ffffff">0</div>
<div class="t" style="left:726.80px;top:72.00px;font-size:15.00px;line-height:15.00px;transform:scaleX(0.9800);color:#ffffff;-webkit-text-stroke:0.4px #ffffff">23</div>
<div class="t" style="left:726.80px;top:88.00px;font-size:15.00px;line-height:15.00px;transform:scaleX(0.9800);color:#ffffff;-webkit-text-stroke:0.4px #ffffff"> </div>
<div class="t" style="left:726.80px;top:104.00px;font-size:15.00px;line-height:15.00px;transform:scaleX(0.9800);color:#ffffff;-webkit-text-stroke:0.4px #ffffff">0</div>
<div class="t" style="left:726.80px;top:415.00px;font-size:15.00px;line-height:15.00px;transform:scaleX(0.9800);color:#ff0000;-webkit-text-stroke:0.4px #ff0000"> </div>
<div class="t" style="left:745.80px;top:72.00px;font-size:15.00px;line-height:15.00px;transform:scaleX(0.9800);color:#ffffff;-webkit-text-stroke:0.4px #ffffff">24</div>
<div class="t" style="left:745.80px;top:88.00px;font-size:15.00px;line-height:15.00px;transform:scaleX(0.9800);color:#ffffff;-webkit-text-stroke:0.4px #ffffff">-</div>
<div class="t" style="left:745.80px;top:104.00px;font-size:15.00px;line-height:15.00px;transform:scaleX(0.9800);color:#ffffff;-webkit-text-stroke:0.4px #ffffff">0</div>
<div class="t" style="left:745.80px;top:415.00px;font-size:15.00px;line-height:15.00px;transform:scaleX(0.9800);color:#ff0000;-webkit-text-stroke:0.4px #ff0000">-</div>
<div class="t" style="left:764.80px;top:72.00px;font-size:15.00px;line-height:15.00px;transform:scaleX(0.9800);color:#ffffff;-webkit-text-stroke:0.4px #ffffff">25</div>
<div class="t" style="left:764.80px;top:88.00px;font-size:15.00px;line-height:15.00px;transform:scaleX(0.9800);color:#ffffff;-webkit-text-stroke:0.4px #ffffff">0</div>
<div class="t" style="left:764.80px;top:104.00px;font-size:15.00px;line-height:15.00px;transform:scaleX(0.9800);color:#ffffff;-webkit-text-stroke:0.4px #ffffff">0</div>
<div class="t" style="left:764.80px;top:415.00px;font-size:15.00px;line-height:15.00px;transform:scaleX(0.9800);color:#ffffff;-webkit-text-stroke:0.4px #ffffff">0</div>
<div class="t" style="left:806.80px;top:72.00px;font-size:15.00px;line-height:15.00px;transform:scaleX(0.9800);color:#ffffff;-webkit-text-stroke:0.4px #ffffff">26</div>
<div class="t" style="left:806.80px;top:88.00px;font-size:15.00px;line-height:15.00px;transform:scaleX(0.9800);color:#ffffff;-webkit-text-stroke:0.4px #ffffff">0</div>
<div class="t" style="left:806.80px;top:104.00px;font-size:15.00px;line-height:15.00px;transform:scaleX(0.9800);color:#ffffff;-webkit-text-stroke:0.4px #ffffff">0</div>
<div class="t" style="left:806.80px;top:415.00px;font-size:15.00px;line-height:15.00px;transform:scaleX(0.9800);color:#ffffff;-webkit-text-stroke:0.4px #ffffff">0</div>
<div class="t" style="left:838.80px;top:72.00px;font-size:15.00px;line-height:15.00px;transform:scaleX(0.9800);color:#ffffff;-webkit-text-stroke:0.4px #ffffff">27</div>
<div class="t" style="left:838.80px;top:88.00px;font-size:15.00px;line-height:15.00px;transform:scaleX(0.9800);color:#ffffff;-webkit-text-stroke:0.4px #ffffff">0</div>
<div class="t" style="left:838.80px;top:104.00px;font-size:15.00px;line-height:15.00px;transform:scaleX(0.9800);color:#ffffff;-webkit-text-stroke:0.4px #ffffff">0</div>
<div class="t" style="left:838.80px;top:415.00px;font-size:15.00px;line-height:15.00px;transform:scaleX(0.9800);color:#ffffff;-webkit-text-stroke:0.4px #ffffff">0</div>
<div class="t" style="left:870.80px;top:72.00px;font-size:15.00px;line-height:15.00px;transform:scaleX(0.9800);color:#ffffff;-webkit-text-stroke:0.4px #ffffff">28</div>
<div class="t" style="left:870.80px;top:88.00px;font-size:15.00px;line-height:15.00px;transform:scaleX(0.9800);color:#ffffff;-webkit-text-stroke:0.4px #ffffff">0</div>
<div class="t" style="left:870.80px;top:104.00px;font-size:15.00px;line-height:15.00px;transform:scaleX(0.9800);color:#ffffff;-webkit-text-stroke:0.4px #ffffff">0</div>
<div class="t" style="left:870.80px;top:415.00px;font-size:15.00px;line-height:15.00px;transform:scaleX(0.9800);color:#ffffff;-webkit-text-stroke:0.4px #ffffff">0</div>
<div class="t" style="left:905.80px;top:72.00px;font-size:15.00px;line-height:15.00px;transform:scaleX(0.9800);color:#ffffff;-webkit-text-stroke:0.4px #ffffff">29</div>
<div class="t" style="left:905.80px;top:88.00px;font-size:15.00px;line-height:15.00px;transform:scaleX(0.9800);color:#ffffff;-webkit-text-stroke:0.4px #ffffff">0</div>
<div class="t" style="left:905.80px;top:104.00px;font-size:15.00px;line-height:15.00px;transform:scaleX(0.9800);color:#ffffff;-webkit-text-stroke:0.4px #ffffff">0</div>
<div class="t" style="left:905.80px;top:415.00px;font-size:15.00px;line-height:15.00px;transform:scaleX(0.9800);color:#ffffff;-webkit-text-stroke:0.4px #ffffff">0</div>
<div class="t" style="left:953.80px;top:72.00px;font-size:15.00px;line-height:15.00px;transform:scaleX(0.9800);color:#ffffff;-webkit-text-stroke:0.4px #ffffff">30</div>
<div class="t" style="left:953.80px;top:88.00px;font-size:15.00px;line-height:15.00px;transform:scaleX(0.9800);color:#ffffff;-webkit-text-stroke:0.4px #ffffff"> </div>
<div class="t" style="left:953.80px;top:104.00px;font-size:15.00px;line-height:15.00px;transform:scaleX(0.9800);color:#ffffff;-webkit-text-stroke:0.4px #ffffff">0</div>
<div class="t" style="left:953.80px;top:415.00px;font-size:15.00px;line-height:15.00px;transform:scaleX(0.9800);color:#ff0000;-webkit-text-stroke:0.4px #ff0000"> </div>
<div class="t" style="left:982.80px;top:72.00px;font-size:15.00px;line-height:15.00px;transform:scaleX(0.9800);color:#ffffff;-webkit-text-stroke:0.4px #ffffff">3 </div>
<div class="t" style="left:982.80px;top:88.00px;font-size:15.00px;line-height:15.00px;transform:scaleX(0.9800);color:#ffffff;-webkit-text-stroke:0.4px #ffffff">-</div>
<div class="t" style="left:982.80px;top:104.00px;font-size:15.00px;line-height:15.00px;transform:scaleX(0.9800);color:#ffffff;-webkit-text-stroke:0.4px #ffffff">0</div>
<div class="t" style="left:982.80px;top:415.00px;font-size:15.00px;line-height:15.00px;transform:scaleX(0.9800);color:#ff0000;-webkit-text-stroke:0.4px #ff0000">-</div>
<div class="t" style="left:1011.80px;top:72.00px;font-size:15.00px;line-height:15.00px;transform:scaleX(0.9800);color:#ffffff;-webkit-text-stroke:0.4px #ffffff">32</div>
<div class="t" style="left:1011.80px;top:88.00px;font-size:15.00px;line-height:15.00px;transform:scaleX(0.9800);color:#ffffff;-webkit-text-stroke:0.4px #ffffff">0</div>
<div class="t" style="left:1011.80px;top:104.00px;font-size:15.00px;line-height:15.00px;transform:scaleX(0.9800);color:#ffffff;-webkit-text-stroke:0.4px #ffffff">0</div>
<div class="t" style="left:1011.80px;top:415.00px;font-size:15.00px;line-height:15.00px;transform:scaleX(0.9800);color:#ffffff;-webkit-text-stroke:0.4px #ffffff">0</div>
<svg class="a" style="left:0;top:0" width="1021" height="437"><path d="M335.50 85.2 L335.50 74.0 L332.10 76.6" fill="none" stroke="#ffffff" stroke-width="1.4" stroke-linejoin="bevel"/><path d="M373.50 85.2 L373.50 74.0 L370.10 76.6" fill="none" stroke="#ffffff" stroke-width="1.4" stroke-linejoin="bevel"/><path d="M381.50 85.2 L381.50 74.0 L378.10 76.6" fill="none" stroke="#ffffff" stroke-width="1.4" stroke-linejoin="bevel"/><path d="M415.50 85.2 L415.50 74.0 L412.10 76.6" fill="none" stroke="#ffffff" stroke-width="1.4" stroke-linejoin="bevel"/><path d="M457.50 85.2 L457.50 74.0 L454.10 76.6" fill="none" stroke="#ffffff" stroke-width="1.4" stroke-linejoin="bevel"/><path d="M498.50 85.2 L498.50 74.0 L495.10 76.6" fill="none" stroke="#ffffff" stroke-width="1.4" stroke-linejoin="bevel"/><path d="M540.50 85.2 L540.50 74.0 L537.10 76.6" fill="none" stroke="#ffffff" stroke-width="1.4" stroke-linejoin="bevel"/><path d="M540.50 101.2 L540.50 90.0 L537.10 92.6" fill="none" stroke="#ffffff" stroke-width="1.4" stroke-linejoin="bevel"/><path d="M540.50 428.2 L540.50 417.0 L537.10 419.6" fill="none" stroke="#ff0000" stroke-width="1.4" stroke-linejoin="bevel"/><path d="M562.50 85.2 L562.50 74.0 L559.10 76.6" fill="none" stroke="#ffffff" stroke-width="1.4" stroke-linejoin="bevel"/><path d="M581.50 85.2 L581.50 74.0 L578.10 76.6" fill="none" stroke="#ffffff" stroke-width="1.4" stroke-linejoin="bevel"/><path d="M581.50 101.2 L581.50 90.0 L578.10 92.6" fill="none" stroke="#ffffff" stroke-width="1.4" stroke-linejoin="bevel"/><path d="M581.50 428.2 L581.50 417.0 L578.10 419.6" fill="none" stroke="#ff0000" stroke-width="1.4" stroke-linejoin="bevel"/><path d="M601.50 85.2 L601.50 74.0 L598.10 76.6" fill="none" stroke="#ffffff" stroke-width="1.4" stroke-linejoin="bevel"/><path d="M601.50 117.2 L601.50 106.0 L598.10 108.6" fill="none" stroke="#ffffff" stroke-width="1.4" stroke-linejoin="bevel"/><path d="M623.50 85.2 L623.50 74.0 L620.10 76.6" fill="none" stroke="#ffffff" stroke-width="1.4" stroke-linejoin="bevel"/><path d="M661.50 101.2 L661.50 90.0 L658.10 92.6" fill="none" stroke="#ffffff" stroke-width="1.4" stroke-linejoin="bevel"/><path d="M661.50 117.2 L661.50 106.0 L658.10 108.6" fill="none" stroke="#ffffff" stroke-width="1.4" stroke-linejoin="bevel"/><path d="M661.50 428.2 L661.50 417.0 L658.10 419.6" fill="none" stroke="#ffffff" stroke-width="1.4" stroke-linejoin="bevel"/><path d="M685.50 85.2 L685.50 74.0 L682.10 76.6" fill="none" stroke="#ffffff" stroke-width="1.4" stroke-linejoin="bevel"/><path d="M732.50 101.2 L732.50 90.0 L729.10 92.6" fill="none" stroke="#ffffff" stroke-width="1.4" stroke-linejoin="bevel"/><path d="M732.50 428.2 L732.50 417.0 L729.10 419.6" fill="none" stroke="#ff0000" stroke-width="1.4" stroke-linejoin="bevel"/><path d="M959.50 101.2 L959.50 90.0 L956.10 92.6" fill="none" stroke="#ffffff" stroke-width="1.4" stroke-linejoin="bevel"/><path d="M959.50 428.2 L959.50 417.0 L956.10 419.6" fill="none" stroke="#ff0000" stroke-width="1.4" stroke-linejoin="bevel"/><path d="M996.50 85.2 L996.50 74.0 L993.10 76.6" fill="none" stroke="#ffffff" stroke-width="1.4" stroke-linejoin="bevel"/></svg>
</div>
<div class="a" style="left:31px;top:437px;width:990px;height:13px;background:linear-gradient(90deg,#e6e6e6,#f0f0f0 3%,#f0f0f0 97%,#e6e6e6)"></div>
<div class="a" style="left:53px;top:438px;width:35px;height:12px;border:1px solid #a4a4a4;border-radius:2px;background:linear-gradient(#f6f6f6,#ececec 50%,#dadada 51%,#d2d2d2)"></div>
<svg class="a" style="left:31px;top:437px" width="990" height="13"><path d="M5 6.5 L8.5 4 L8.5 9Z" fill="#404040"/><path d="M985.5 6.5 L982 4 L982 9Z" fill="#404040"/><path d="M37 4 v5 M39.5 4 v5 M42 4 v5" stroke="#6a6a6a" stroke-width="1"/><path d="M38 4.5 v4.5 M40.5 4.5 v4.5 M43 4.5 v4.5" stroke="#fafafa" stroke-width="1"/></svg>
<div class="btn" style="left:6px;top:450px;width:19px;height:17px"></div>
<div class="btn" style="left:31px;top:450px;width:20px;height:17px"></div>
<div class="a" style="left:13px;top:459px;width:5px;height:1.3px;background:#222"></div><div class="a" style="left:15px;top:457px;width:1.2px;height:5px;background:#222"></div>
<div class="a" style="left:39px;top:459px;width:3px;height:1.3px;background:#222"></div>
<div class="btn" style="left:57px;top:454px;width:58px;height:17px"></div>
<div class="t" style="left:74.13px;top:458.00px;font-size:10.43px;line-height:10.43px;transform:scaleX(0.8088);color:#1a1a1a;">Reset</div>
<div class="a" style="left:164px;top:458px;width:10px;height:10px;border-radius:50%;border:1px solid #7a7a7a;background:radial-gradient(circle at 50% 45%,#7ac0f0 0,#2a70b0 22%,#103c6c 40%,#c8c8c8 50%,#f4f4f4 100%)"></div>
<div class="t" style="left:179.00px;top:458.00px;font-size:10.72px;line-height:10.72px;transform:scaleX(0.7706);color:#1a1a1a;">Algoritm 1</div>
<div class="a" style="left:310px;top:457px;width:10px;height:10px;border-radius:50%;border:1px solid #9a9a9a;background:radial-gradient(circle,#d8d8d8 0,#f4f4f4 100%)"></div>
<div class="t" style="left:325.50px;top:457.00px;font-size:10.72px;line-height:10.72px;transform:scaleX(0.7714);color:#1a1a1a;">Algoritm 2</div>
<div class="cb" style="left:470px;top:456px;width:10px;height:10px"></div>
<div class="t" style="left:484.31px;top:456.00px;font-size:10.72px;line-height:10.72px;transform:scaleX(0.8033);color:#1a1a1a;">Reverse</div>
<div class="t" style="left:683.81px;top:461.00px;font-size:10.72px;line-height:10.72px;transform:scaleX(0.8053);color:#1a1a1a;">Double My Track</div>
<div class="btn" style="left:906px;top:456px;width:52px;height:17px"></div>
<div class="t" style="left:914.50px;top:460.00px;font-size:10.43px;line-height:10.43px;transform:scaleX(0.8363);color:#1a1a1a;">Remove</div>
<div class="t" style="left:11.73px;top:472.00px;font-size:10.72px;line-height:10.72px;transform:scaleX(0.8081);color:#1a1a1a;">Track1</div>
<div class="t" style="left:11.73px;top:490.00px;font-size:10.72px;line-height:10.72px;transform:scaleX(0.8095);color:#1a1a1a;">Track2</div>
<div class="t" style="left:11.73px;top:510.00px;font-size:10.72px;line-height:10.72px;transform:scaleX(0.8068);color:#1a1a1a;">Track3</div>
<div class="t" style="left:11.73px;top:528.00px;font-size:10.72px;line-height:10.72px;transform:scaleX(0.8041);color:#1a1a1a;">Track4</div>
<div class="t" style="left:11.73px;top:546.00px;font-size:10.72px;line-height:10.72px;transform:scaleX(0.8068);color:#1a1a1a;">Track5</div>
<div class="tb" style="left:47px;top:472px;width:237px;height:16px;"></div>
<div class="t" style="left:49.46px;top:475.00px;font-size:10.58px;line-height:10.58px;transform:scaleX(0.8150);color:#1a1a1a;">000;1234567890123456=191912345678901?</div>
<div class="tb" style="left:47px;top:490px;width:237px;height:16px;"></div>
<div class="t" style="left:49.46px;top:493.00px;font-size:10.58px;line-height:10.58px;transform:scaleX(0.8150);color:#1a1a1a;">00050192X;34X80192X;60X0X0192X;34X80?</div>
<div class="tb" style="left:47px;top:507px;width:237px;height:16px;"></div>
<div class="t" style="left:49.46px;top:510.00px;font-size:10.58px;line-height:10.58px;transform:scaleX(0.8150);color:#1a1a1a;">008X08495=1X6X08495=;8X8X08495=1X6X8?</div>
<div class="tb" style="left:47px;top:526px;width:237px;height:16px;"></div>
<div class="t" style="left:49.46px;top:529.00px;font-size:10.58px;line-height:10.58px;transform:scaleX(0.8150);color:#1a1a1a;">00X58X24XX05368X24X6547478X24XX0536X7</div>
<div class="tb" style="left:47px;top:544px;width:237px;height:16px;"></div>
<div class="t" style="left:49.46px;top:547.00px;font-size:10.58px;line-height:10.58px;transform:scaleX(0.8150);color:#1a1a1a;">0062469X=?0213469X=;22323469X=?0213X</div>
<div class="tb" style="left:297px;top:472px;width:237px;height:16px;border-color:#a4c9e3;border-top-color:#3d7bad;"></div>
<div class="t" style="left:299.46px;top:475.00px;font-size:10.58px;line-height:10.58px;transform:scaleX(0.8150);color:#1a1a1a;">00080003454?00480038X5;047478X2X280053XX</div>
<div class="tb" style="left:297px;top:490px;width:237px;height:16px;"></div>
<div class="t" style="left:299.46px;top:493.00px;font-size:10.58px;line-height:10.58px;transform:scaleX(0.8150);color:#1a1a1a;">000X00092X27002X001472=0232346961400217?</div>
<div class="tb" style="left:297px;top:507px;width:237px;height:16px;"></div>
<div class="t" style="left:299.46px;top:510.00px;font-size:10.58px;line-height:10.58px;transform:scaleX(0.8150);color:#1a1a1a;">00060084959300160802;960919123430208903</div>
<div class="tb" style="left:297px;top:525px;width:237px;height:16px;"></div>
<div class="t" style="left:299.46px;top:528.00px;font-size:10.58px;line-height:10.58px;transform:scaleX(0.8150);color:#1a1a1a;">000300X242X100030X095X30X0X019290104X89</div>
<div class="tb" style="left:297px;top:543px;width:237px;height:16px;"></div>
<div class="t" style="left:299.46px;top:546.00px;font-size:10.58px;line-height:10.58px;transform:scaleX(0.8150);color:#1a1a1a;">00010069X9X00801060XX618X8X08494000X6XX</div>
<div class="tb" style="left:684px;top:474px;width:237px;height:16px;"></div>
<div class="t" style="left:686.46px;top:477.00px;font-size:10.58px;line-height:10.58px;transform:scaleX(0.8150);color:#1a1a1a;">000;1234567890123456=191912345678901?</div>
<div class="tb" style="left:684px;top:492px;width:237px;height:16px;"></div>
<div class="t" style="left:686.46px;top:495.00px;font-size:10.58px;line-height:10.58px;transform:scaleX(0.8150);color:#1a1a1a;">00050192X;34X80192X;60X0X0192X;34X80?</div>
<div class="tb" style="left:684px;top:510px;width:237px;height:16px;"></div>
<div class="t" style="left:686.46px;top:513.00px;font-size:10.58px;line-height:10.58px;transform:scaleX(0.8150);color:#1a1a1a;">008X08495=1X6X08495=;8X8X08495=1X6X8?</div>
<div class="tb" style="left:684px;top:528px;width:237px;height:16px;"></div>
<div class="t" style="left:686.46px;top:531.00px;font-size:10.58px;line-height:10.58px;transform:scaleX(0.8150);color:#1a1a1a;">00X58X24XX05368X24X6547478X24XX0536X7</div>
<div class="tb" style="left:684px;top:546px;width:237px;height:16px;"></div>
<div class="t" style="left:686.46px;top:549.00px;font-size:10.58px;line-height:10.58px;transform:scaleX(0.8150);color:#1a1a1a;">0062469X=?0213469X=;22323469X=?0213X</div>
<div class="btn" style="left:518px;top:568px;width:59px;height:17px"></div>
<div class="t" style="left:527.27px;top:572.00px;font-size:10.43px;line-height:10.43px;transform:scaleX(0.8321);color:#1a1a1a;">Get Value</div>
<div class="tb" style="left:599px;top:566px;width:322px;height:16px;"></div>
<div class="t" style="left:600.72px;top:569.00px;font-size:10.58px;line-height:10.58px;transform:scaleX(0.8150);color:#1a1a1a;">;1234567890123456=191912345678901?</div>
<div class="a" style="left:0;top:591px;width:1024px;height:15px;background:#efebeb"></div>
<div class="a" style="left:2px;top:593px;width:79px;height:12px;border:1px solid #b8b4b4;border-radius:2px;background:linear-gradient(90deg,rgba(0,90,0,0.3),rgba(0,90,0,0) 14%,rgba(0,90,0,0) 86%,rgba(0,90,0,0.3)),linear-gradient(#c4f6c4 0%,#b0f0b0 30%,#06cc26 40%,#04c424 100%)"></div>
<div class="a" style="left:0;top:606px;width:1024px;height:2px;background:#fafafa"></div>
<div class="a" style="left:0;top:608px;width:1024px;height:32px;background:linear-gradient(#252b32 0,#3a4048 1px,#1c2128 2px,#0d1117 4px,#0b0f15 100%)"></div>
<svg class="a" style="left:0;top:608px" width="1024" height="32" viewBox="0 608 1024 32"><defs><radialGradient id="orb" cx="50%" cy="40%" r="60%"><stop offset="0" stop-color="#5aa8d8"/><stop offset="0.5" stop-color="#1e6aa8"/><stop offset="0.85" stop-color="#0c3e70"/><stop offset="1" stop-color="#2a90c0"/></radialGradient><linearGradient id="btng" x1="0" y1="0" x2="1" y2="1"><stop offset="0" stop-color="#5a6066"/><stop offset="0.45" stop-color="#2c3136"/><stop offset="1" stop-color="#1c2024"/></linearGradient><linearGradient id="btna" x1="0" y1="0" x2="1" y2="1"><stop offset="0" stop-color="#b8bcc0"/><stop offset="0.45" stop-color="#8a8e93"/><stop offset="1" stop-color="#74787d"/></linearGradient><radialGradient id="ffg" cx="55%" cy="40%" r="60%"><stop offset="0" stop-color="#2a7ad0"/><stop offset="0.55" stop-color="#1a4f9c"/><stop offset="0.6" stop-color="#f0a020"/><stop offset="1" stop-color="#e05a10"/></radialGradient></defs><circle cx="21.5" cy="624" r="15" fill="#0a0d12"/><circle cx="21.5" cy="624" r="14" fill="url(#orb)" stroke="#4a6a88" stroke-width="1"/><ellipse cx="21.5" cy="617.5" rx="11" ry="6.5" fill="#ffffff" opacity="0.28"/><ellipse cx="21.5" cy="633" rx="8" ry="4" fill="#40d8ff" opacity="0.45"/><path d="M15 617.5 Q17.5 616.5 21 617.5 L20 623 Q16.5 622 14 623Z" fill="#e8502a"/><path d="M22 618 Q25 619 28.5 618 L27.5 623.5 Q24.5 624.5 21 623.5Z" fill="#8cc43c"/><path d="M13.8 624 Q16.5 623 19.8 624 L19 629.5 Q15.5 628.5 13 629.5Z" fill="#3a9ae8"/><path d="M20.8 624.5 Q24 625.5 27.3 624.5 L26.5 630 Q23.5 631 20 630Z" fill="#f8c02a"/><circle cx="72" cy="624.5" r="8.5" fill="#2a8ee0"/><circle cx="72" cy="624.5" r="4.2" fill="#0b0f15"/><rect x="66" y="623.5" width="12" height="2.4" fill="#5ab8f0"/><rect x="72" y="626" width="7" height="3" fill="#0b0f15"/><path d="M60 634 Q58 628 68 618 Q80 608 84 613 Q85 616 82 619" fill="none" stroke="#e8b020" stroke-width="2"/><rect x="97.5" y="609.5" width="42" height="29" rx="2" fill="url(#btng)" stroke="#80868c" stroke-width="1"/><rect x="140.5" y="609.5" width="3" height="29" rx="1" fill="#2a2e33" stroke="#6a7076" stroke-width="1"/><path d="M106 616 L113 614 L122 615 L131 617 L131 635 L106 635Z" fill="#f2dc8c"/><rect x="106" y="619" width="25" height="16" fill="#f6e4a0"/><rect x="109" y="614.5" width="3" height="2" fill="#20c020"/><rect x="115" y="616" width="3" height="2" fill="#e03020"/><rect x="122" y="617.5" width="3" height="2" fill="#2080e0"/><path d="M109 636 L109 627 Q109 626 111 626 L127 626 Q128 626 128 627 L128 636 L124 636 L124 630 L113 630 L113 636Z" fill="#6ec0ec" stroke="#4a9ed8" stroke-width="0.6"/><rect x="159" y="615.5" width="21" height="19.5" fill="#7ab8dc" stroke="#9ccae4" stroke-width="1"/><rect x="176" y="617" width="4" height="17" fill="#5a9cc4"/><circle cx="168.5" cy="625" r="7" fill="#f07820"/><path d="M166 621 L173 625 L166 629Z" fill="#fff"/><rect x="197.5" y="609.5" width="45" height="29" rx="2" fill="url(#btng)" stroke="#80868c" stroke-width="1"/><defs><linearGradient id="fxg" x1="0" y1="1" x2="1" y2="0"><stop offset="0" stop-color="#d8421a"/><stop offset="0.55" stop-color="#f27c1c"/><stop offset="1" stop-color="#fad232"/></linearGradient><radialGradient id="glb" cx="45%" cy="25%" r="75%"><stop offset="0" stop-color="#62c4f4"/><stop offset="0.6" stop-color="#2a6ac0"/><stop offset="1" stop-color="#1a3a88"/></radialGradient></defs><circle cx="222.5" cy="621.5" r="9.6" fill="url(#glb)"/><path fill-rule="evenodd" fill="url(#fxg)" d="M208 624 a12 12 0 1 0 24 0 a12 12 0 1 0 -24 0 Z M214.6 620.8 a9.2 9.2 0 1 0 18.4 0 a9.2 9.2 0 1 0 -18.4 0 Z"/><path d="M209.5 620 L212 611.5 L217.5 616.5 Z" fill="#f06a1a"/><path d="M215 622 Q217 628 224 628.5 Q219 626 219.5 621 Z" fill="#ea6a1c"/><rect x="246.5" y="609.5" width="46" height="29" rx="2" fill="url(#btna)" stroke="#c4c8cc" stroke-width="1"/><rect x="258.5" y="613" width="22" height="21.5" fill="#9a9da0" opacity="0.5"/><rect x="268" y="613.5" width="12" height="11.5" fill="#f0b000" stroke="#c08800" stroke-width="0.8"/><rect x="259.5" y="619" width="8" height="9" fill="#d83a30" stroke="#a02018" stroke-width="0.8"/><rect x="268" y="626" width="12" height="8" fill="#4a8ef0"/><rect x="259.5" y="629.5" width="3.5" height="4.5" fill="#888"/><rect x="264" y="629.5" width="3.5" height="4.5" fill="#888"/><rect x="296.5" y="609.5" width="46" height="29" rx="2" fill="url(#btng)" stroke="#80868c" stroke-width="1"/><ellipse cx="318" cy="625" rx="12" ry="8.5" transform="rotate(-20 318 625)" fill="#b8dcf0"/><circle cx="311" cy="625" r="1.8" fill="#e03030"/><circle cx="314.5" cy="621.5" r="1.8" fill="#40b830"/><circle cx="320" cy="619.5" r="1.8" fill="#f0c020"/><circle cx="317.5" cy="627" r="1.3" fill="#0b0f15"/><path d="M318.5 636.5 L326.5 622" stroke="#e88a20" stroke-width="2"/><path d="M325.5 621 L327 613 L332 615 Z" fill="#e0a860"/><path d="M855.5 627 L858.8 623.5 L862 627Z" fill="#e8e8e8"/><rect x="872.5" y="619" width="1.2" height="12" fill="#d8d8d8"/><path d="M874 619.5 L881 619.5 L883 621 L883 626 L874 625.5Z" fill="#e8e8e8"/><circle cx="880.5" cy="628" r="3.5" fill="#e02020"/><path d="M878.8 626.3 L882.2 629.7 M882.2 626.3 L878.8 629.7" stroke="#fff" stroke-width="1"/><rect x="892" y="621" width="6" height="9" fill="none" stroke="#c8c8c8" stroke-width="1"/><path d="M897 622 L902 619.5 L902 625 Z" fill="#e0e0e0"/><path d="M892 626 L898 631 M898 626 L892 631" stroke="#e02020" stroke-width="1.3"/><rect x="911.5" y="627" width="1.6" height="2" fill="#f0f0f0"/><rect x="914" y="625.5" width="1.6" height="3.5" fill="#f0f0f0"/><rect x="916.5" y="624" width="1.6" height="5" fill="#f0f0f0"/><rect x="919" y="622.5" width="1.6" height="6.5" fill="#f0f0f0"/><rect x="921.5" y="621" width="1.6" height="8" fill="#f0f0f0"/><path d="M932 622.5 L934.5 622.5 L938.5 619.5 L938.5 630.5 L934.5 627.5 L932 627.5Z" fill="#e8e8e8"/><path d="M940 622.5 Q941.5 625 940 627.5" stroke="#c0c0c0" fill="none" stroke-width="0.8"/><rect x="1013.5" y="609.5" width="9" height="29" fill="#14181d" stroke="#6c7278" stroke-width="1"/></svg>
<div class="t" style="left:831.18px;top:617.00px;font-size:10.87px;line-height:10.87px;transform:scaleX(0.8322);color:#c8c8c8;">FR</div>
<div class="t" style="left:968.31px;top:613.00px;font-size:11.30px;line-height:11.30px;transform:scaleX(0.8143);color:#e4e4e4;">13:19</div>
<div class="t" style="left:955.79px;top:626.00px;font-size:10.87px;line-height:10.87px;transform:scaleX(0.8748);color:#e4e4e4;">15/03/2015</div>
</body></html>
